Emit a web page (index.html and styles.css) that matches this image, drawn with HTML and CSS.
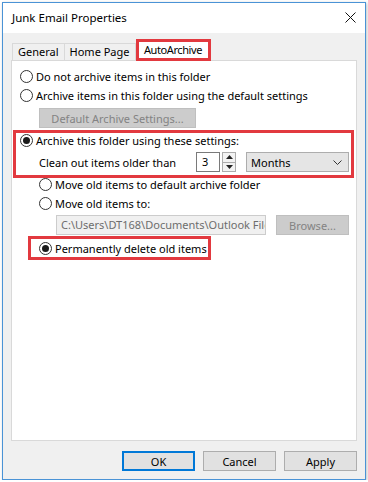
FILE: index.html
```html
<!DOCTYPE html>
<html>
<head>
<meta charset="utf-8">
<link rel="stylesheet" href="styles.css">
</head>
<body>
<div class="window">
  <div class="titlebar">
    <span class="title">Junk Email Properties</span>
    <svg class="close" width="11" height="11" viewBox="0 0 11 11"><path d="M0.5 0.5 L10.5 10.5 M10.5 0.5 L0.5 10.5" stroke="#111" stroke-width="1" fill="none"/></svg>
  </div>
  <div class="content">
    <div class="tabs">
      <div class="tab">General</div>
      <div class="tab">Home Page</div>
      <div class="tab active">AutoArchive</div>
    </div>
    <div class="panel">
      <div class="row r-top"><span class="radio"></span><span>Do not archive items in this folder</span></div>
      <div class="row r-top"><span class="radio"></span><span>Archive items in this folder using the default settings</span></div>
      <div class="btn disabled default-btn">Default Archive Settings...</div>
      <div class="mark mark1">
        <div class="row r-in"><span class="radio checked"></span><span>Archive this folder using these settings:</span></div>
        <div class="clean">
          <span class="clean-label">Clean out items older than</span>
          <span class="spin-input">3</span>
          <span class="spin">
            <span class="spin-up"><svg width="7" height="4" viewBox="0 0 7 4"><path d="M3.5 0 L7 4 L0 4 Z" fill="#222"/></svg></span>
            <span class="spin-down"><svg width="7" height="4" viewBox="0 0 7 4"><path d="M0 0 L7 0 L3.5 4 Z" fill="#222"/></svg></span>
          </span>
          <span class="select"><span>Months</span><svg width="9" height="5" viewBox="0 0 9 5"><path d="M0.5 0.5 L4.5 4.5 L8.5 0.5" stroke="#333" stroke-width="1" fill="none"/></svg></span>
        </div>
      </div>
      <div class="row r-sub"><span class="radio"></span><span>Move old items to default archive folder</span></div>
      <div class="row r-sub"><span class="radio"></span><span>Move old items to:</span></div>
      <div class="path-row">
        <span class="path"><span class="path-text">C:\Users\DT168\Documents\Outlook File</span></span>
        <span class="btn disabled browse">Browse...</span>
      </div>
      <div class="mark mark2">
        <div class="row r-mark2"><span class="radio checked"></span><span>Permanently delete old items</span></div>
      </div>
    </div>
    <div class="buttons">
      <div class="btn default">OK</div>
      <div class="btn">Cancel</div>
      <div class="btn">Apply</div>
    </div>
  </div>
</div>
</body>
</html>
```

FILE: styles.css
```css
* { box-sizing: border-box; }
html, body { margin: 0; padding: 0; background: #ffffff; }
body {
  font-family: "Noto Sans", "Liberation Sans", sans-serif;
  font-size: 11px;
  color: #000;
}
.window {
  margin: 2px 0 0 2px;
  width: 364px;
  height: 478px;
  border: 1px solid #4a93d6;
  display: flex;
  flex-direction: column;
  box-shadow: 1px 1px 3px rgba(0,0,0,0.25);
}
.titlebar {
  height: 30px;
  flex: none;
  background: #fff;
  display: flex;
  align-items: center;
  justify-content: space-between;
  padding: 0 9px 0 9px;
}
.title { line-height: 16px; font-size: 11.5px; }
.close { display: block; margin-top: -1px; }
.content {
  flex: 1;
  background: #f0f0f0;
  padding: 6px 8px 0 8px;
  display: flex;
  flex-direction: column;
}
.tabs {
  display: flex;
  align-items: flex-end;
  height: 21px;
  padding-left: 1px;
}
.tab {
  height: 17px;
  border: 1px solid #d9d9d9;
  border-bottom: none;
  padding: 0 5px;
  line-height: 16px;
  background: #f0f0f0;
}
.tab + .tab { border-left: none; }
.tab.active {
  flex: none;
  width: 69px;
  min-width: 0;
  height: 16px;
  margin: 0 0 2px 3px;
  background: #fff;
  border: none;
  outline: 3px solid #e2393f;
  position: relative;
  z-index: 1;
  padding: 0;
  text-align: center;
  line-height: 15px;
  letter-spacing: -0.4px;
  white-space: nowrap;
}
.panel {
  height: 381px;
  background: #fff;
  border: 1px solid #d9d9d9;
  padding-top: 6px;
  display: flex;
  flex-direction: column;
  align-items: flex-start;
}
.row {
  display: flex;
  align-items: center;
  gap: 3px;
  height: 19px;
  white-space: nowrap;
}
.r-top { margin-left: 8px; }
.r-sub { margin-left: 27px; }
.radio {
  width: 13px;
  height: 13px;
  border-radius: 50%;
  border: 1px solid #333;
  background: #fff;
  flex: none;
  display: flex;
  align-items: center;
  justify-content: center;
}
.radio.checked::after {
  content: "";
  width: 7px;
  height: 7px;
  border-radius: 50%;
  background: #1a1a1a;
}
.btn {
  height: 20px;
  width: 73px;
  background: #e1e1e1;
  border: 1px solid #adadad;
  display: flex;
  align-items: center;
  justify-content: center;
  white-space: nowrap;
}
.btn.disabled {
  background: #cccccc;
  border-color: #bfbfbf;
  color: #838383;
}
.btn.default {
  border: 2px solid #0078d7;
}
.default-btn {
  margin: 3px 0 0 27px;
  width: 157px;
}
.mark {
  outline: 3px solid #e2393f;
}
.mark1 {
  margin: 5px 0 0 4px;
  width: 335px;
  padding-bottom: 3px;
}
.r-in { margin-left: 4px; height: 15px; }
.clean {
  margin-top: 4px;
  height: 20px;
  display: flex;
  align-items: center;
}
.clean-label {
  margin-left: 23px;
  width: 157px;
  white-space: nowrap;
}
.spin-input {
  width: 24px;
  height: 20px;
  border: 1px solid #7a7a7a;
  background: #fff;
  padding-left: 5px;
  line-height: 18px;
}
.spin {
  margin-left: 2px;
  width: 14px;
  height: 20px;
  display: flex;
  flex-direction: column;
}
.spin-up, .spin-down {
  flex: 1;
  background: #f3f3f3;
  border: 1px solid #acacac;
  display: flex;
  align-items: center;
  justify-content: center;
}
.spin-down { border-top: none; }
.select {
  margin-left: 10px;
  width: 103px;
  height: 20px;
  background: #e5e5e5;
  border: 1px solid #adadad;
  display: flex;
  align-items: center;
  justify-content: space-between;
  padding: 0 6px 0 4px;
}
.path-row {
  margin: 2px 0 0 44px;
  display: flex;
  align-items: center;
}
.path {
  width: 210px;
  height: 20px;
  background: #f0f0f0;
  border: 1px solid #cccccc;
  color: #6d6d6d;
  overflow: hidden;
  white-space: nowrap;
  padding-left: 4px;
  line-height: 18px;
}
.browse { margin-left: 10px; width: 73px; }
.mark2 {
  margin: 4px 0 0 19px;
  width: 177px;
  height: 18px;
}
.r-mark2 { margin-left: 8px; height: 18px; }
.buttons {
  margin-top: 10px;
  display: flex;
  justify-content: flex-end;
  gap: 8px;
}
```
